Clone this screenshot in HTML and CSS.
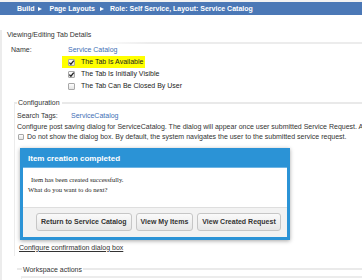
FILE: index.html
```html
<!DOCTYPE html>
<html>
<head>
<meta charset="utf-8">
<link rel="stylesheet" href="styles.css">
</head>
<body>
<div class="page">
  <div class="crumbs">
    <span>Build</span><span class="arr a1"></span>
    <span>Page Layouts</span><span class="arr a2"></span>
    <span>Role: Self Service, Layout: Service Catalog</span>
  </div>
  <div class="main">
    <div class="sec-title">Viewing/Editing Tab Details</div>
    <div class="sep"></div>
    <div class="row"><span class="lbl">Name:</span><span class="link">Service Catalog</span></div>
    <div class="row cb-row"><span class="hl"><span class="box on"><svg viewBox="0 0 7 7"><path d="M1.3 3.6 L2.9 5.2 L5.8 1.6" fill="none" stroke="#222" stroke-width="1.3"/></svg></span><span class="cb-text">The Tab Is Available</span></span></div>
    <div class="row cb-row"><span class="box on"><svg viewBox="0 0 7 7"><path d="M1.3 3.6 L2.9 5.2 L5.8 1.6" fill="none" stroke="#222" stroke-width="1.3"/></svg></span><span class="cb-text">The Tab Is Initially Visible</span></div>
    <div class="row cb-row"><span class="box"></span><span class="cb-text">The Tab Can Be Closed By User</span></div>

    <fieldset class="fs config">
      <legend>Configuration</legend>
      <div class="crow"><span class="lbl2">Search Tags:</span><span class="link">ServiceCatalog</span></div>
      <div class="crow clip">Configure post saving dialog for ServiceCatalog. The dialog will appear once user submitted Service Request. A</div>
      <div class="crow clip dns"><span class="box small"></span>Do not show the dialog box. By default, the system navigates the user to the submitted service request.</div>

      <div class="dialog">
        <div class="dlg-head">Item creation completed</div>
        <div class="dlg-body">
          <div class="msg1">Item has been created successfully.</div>
          <div class="msg2">What do you want to do next?</div>
        </div>
        <div class="dlg-foot">
          <span class="btn">Return to Service Catalog</span>
          <span class="btn">View My Items</span>
          <span class="btn">View Created Request</span>
        </div>
      </div>

      <div class="cfg-link">Configure confirmation dialog box</div>
    </fieldset>

    <fieldset class="fs workspace">
      <legend>Workspace actions</legend>
      <div class="inner"></div>
    </fieldset>
  </div>
</div>
</body>
</html>
```

FILE: styles.css
```css
* { box-sizing: border-box; }
html { overflow: hidden; }
html, body { margin: 0; padding: 0; background: #fff; }
body {
  font-family: "Liberation Sans", Arial, sans-serif;
  font-size: 7px;
  color: #333;
  width: 362px;
  height: 280px;
  overflow: hidden;
}
.page { border-top: 2px solid #f2f2f2; height: 280px; overflow: hidden; }
.crumbs {
  height: 13px;
  line-height: 13px;
  background: #4b78b6;
  color: #fff;
  font-weight: bold;
  font-size: 7px;
  padding-left: 17px;
  display: flex;
  align-items: center;
  white-space: nowrap;
}
.arr {
  width: 0; height: 0;
  border-left: 4px solid #fff;
  border-top: 2.5px solid transparent;
  border-bottom: 2.5px solid transparent;
}
.a1 { margin: 0 8px 0 3px; }
.a2 { margin: 0 6px 0 5px; }
.main {
  border-left: 2px solid #ececec;
  height: 265px;
}
.sec-title {
  margin-top: 15px;
  padding-left: 5px;
  line-height: 9px;
  height: 9px;
}
.sep {
  margin-top: 3px;
  height: 2px;
  background: linear-gradient(to right, rgba(235,235,235,0) 0, rgba(235,235,235,0) 90px, #ececec 150px, #ececec 100%);
}
.row {
  height: 12px;
  line-height: 12px;
  display: flex;
  align-items: center;
  white-space: nowrap;
}
.lbl { margin-left: 9px; width: 57px; }
.link { color: #3f6fb5; }
.cb-row { padding-left: 60px; }
.hl {
  background: #ffff00;
  display: flex;
  align-items: center;
  height: 12px;
  padding-left: 6px;
  width: 83px;
}
.cb-row > .box { margin-left: 6px; }
.box {
  width: 7px;
  height: 7px;
  border: 1px solid #a8a8a8;
  border-radius: 1px;
  background: linear-gradient(#fdfdfd, #e4e4e4);
  display: inline-block;
  flex: none;
  position: relative;
}
.box svg { position: absolute; left: -1px; top: -1px; width: 7px; height: 7px; }
.cb-text { margin-left: 6px; color: #222; }

.fs {
  margin: 0;
  min-width: 0;
}
.config {
  margin: 6px 0 0 12px;
  border: 0;
  border-top: 2px solid #e9e9e9;
  border-left: 1px solid #ececec;
  padding: 0 0 4px 2px;
}
.config legend {
  padding: 0 2px 0 1px;
  line-height: 9px;
  font-size: 7px;
}
.crow {
  line-height: 10.5px;
  height: 10.5px;
  display: flex;
  align-items: center;
  white-space: nowrap;
}
.clip { overflow: hidden; }
.crow:first-of-type { margin-top: 4px; }
.lbl2 { width: 54px; }
.dns .box.small { width: 6px; height: 6px; margin: 0 3px 0 1px; }
.dialog {
  margin-top: 5px;
  margin-left: 3px;
  width: 270px;
  border: 3px solid #2b93d6;
  border-top: 0;
  background: #2b93d6;
  box-shadow: 0 1px 4px rgba(0,0,0,.35);
}
.dlg-head {
  height: 19px;
  line-height: 21px;
  color: #fff;
  font-weight: bold;
  font-size: 8px;
  padding-left: 5px;
}
.dlg-body {
  background: #fff;
  height: 40px;
  padding-top: 7px;
  font-family: "Liberation Serif", "Times New Roman", serif;
  font-size: 6.6px;
  color: #222;
  border-top: 1px solid #6fb5e4;
}
.msg1 { padding-left: 8px; line-height: 10px; }
.msg2 { padding-left: 5px; line-height: 10px; }
.dlg-foot {
  background: #f2f2f2;
  border-top: 1px solid #dedede;
  height: 30px;
  display: flex;
  align-items: center;
  padding-left: 13px;
  gap: 4px;
}
.btn {
  height: 18px;
  line-height: 16px;
  padding: 0 4px;
  border: 1px solid #c6c6c6;
  border-radius: 3px;
  background: linear-gradient(#fafafa, #e6e6e6);
  font-weight: bold;
  font-size: 7px;
  color: #333;
  white-space: nowrap;
}
.cfg-link {
  margin-top: 3px;
  margin-left: 2px;
  text-decoration: underline;
  line-height: 9px;
  color: #333;
}
.workspace {
  margin: 9px 0 0 15px;
  border: 0;
  border-top: 2px solid #eaeaea;
  padding: 0 0 0 4px;
}
.workspace legend {
  padding: 0 1px;
  margin-left: 1px;
  line-height: 9px;
  font-size: 7px;
}
.inner {
  margin-top: 2px;
  height: 3px;
  border-top: 2px solid #ececec;
  border-left: 1px solid #ececec;
}
```
